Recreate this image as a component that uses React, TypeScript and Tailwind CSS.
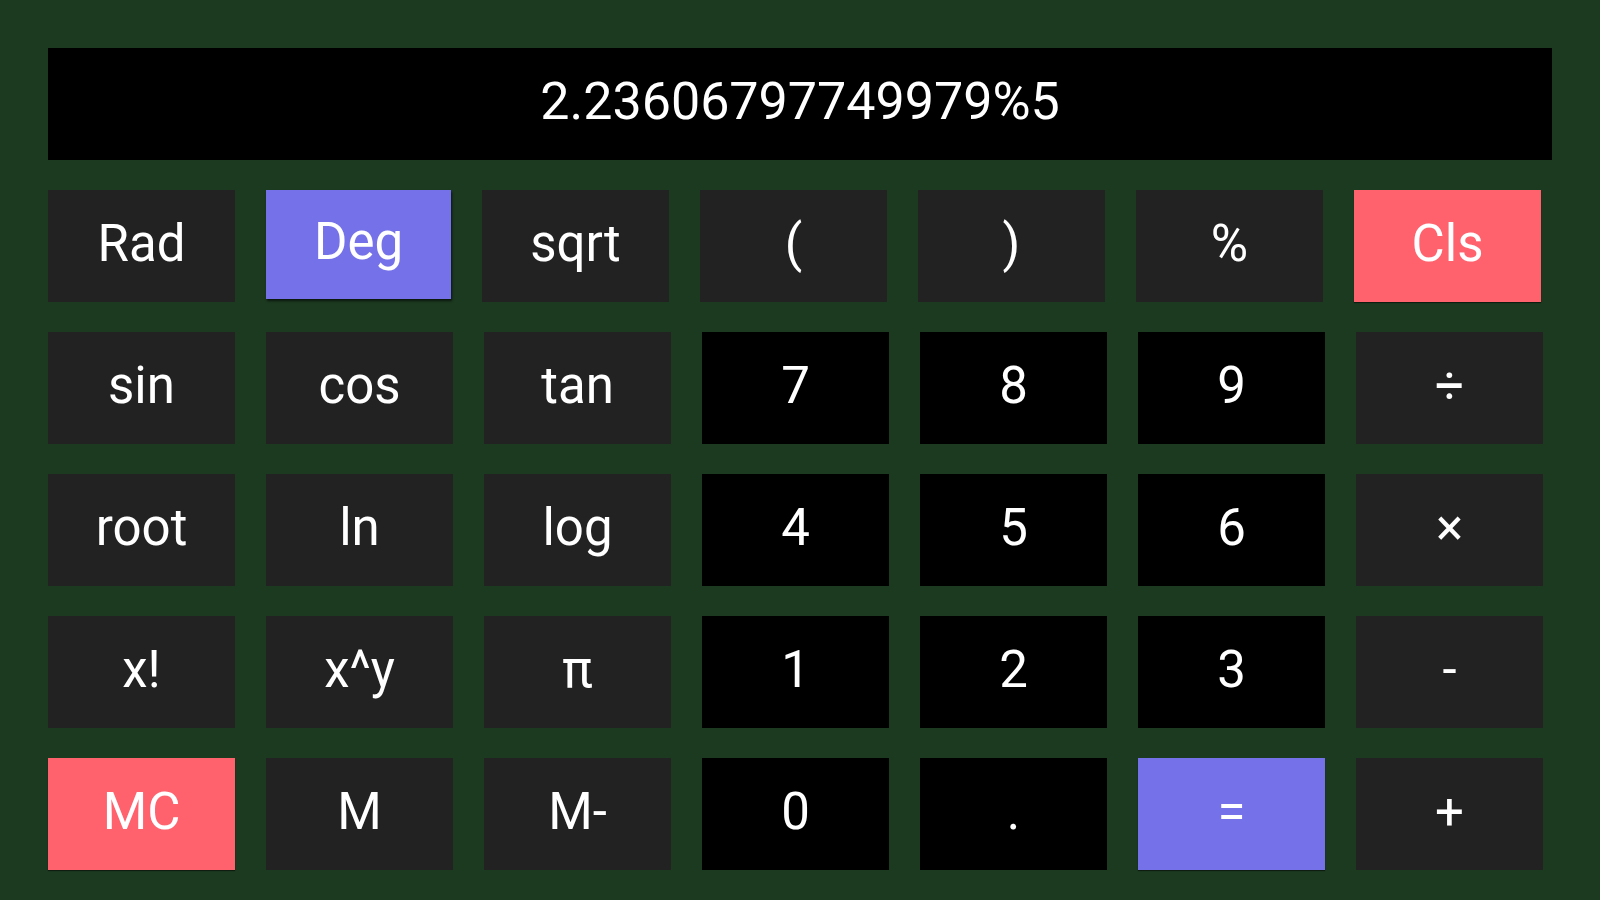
const rows: { label: string; kind: 'fn' | 'num' | 'red' | 'blue' | 'deg' }[][] = [
  [
    { label: 'Rad', kind: 'fn' },
    { label: 'Deg', kind: 'deg' },
    { label: 'sqrt', kind: 'fn' },
    { label: '(', kind: 'fn' },
    { label: ')', kind: 'fn' },
    { label: '%', kind: 'fn' },
    { label: 'Cls', kind: 'red' },
  ],
  [
    { label: 'sin', kind: 'fn' },
    { label: 'cos', kind: 'fn' },
    { label: 'tan', kind: 'fn' },
    { label: '7', kind: 'num' },
    { label: '8', kind: 'num' },
    { label: '9', kind: 'num' },
    { label: '÷', kind: 'fn' },
  ],
  [
    { label: 'root', kind: 'fn' },
    { label: 'ln', kind: 'fn' },
    { label: 'log', kind: 'fn' },
    { label: '4', kind: 'num' },
    { label: '5', kind: 'num' },
    { label: '6', kind: 'num' },
    { label: '×', kind: 'fn' },
  ],
  [
    { label: 'x!', kind: 'fn' },
    { label: 'x^y', kind: 'fn' },
    { label: 'π', kind: 'fn' },
    { label: '1', kind: 'num' },
    { label: '2', kind: 'num' },
    { label: '3', kind: 'num' },
    { label: '-', kind: 'fn' },
  ],
  [
    { label: 'MC', kind: 'red' },
    { label: 'M', kind: 'fn' },
    { label: 'M-', kind: 'fn' },
    { label: '0', kind: 'num' },
    { label: '.', kind: 'num' },
    { label: '=', kind: 'blue' },
    { label: '+', kind: 'fn' },
  ],
];

const kindClass = {
  fn: 'bg-[#222222] w-[187px] h-[112px]',
  num: 'bg-black w-[187px] h-[112px]',
  red: 'bg-[#ff616d] w-[187px] h-[112px] shadow-[0_1px_1px_rgba(0,0,0,0.5)]',
  blue: 'bg-[#7571e8] w-[187px] h-[112px] shadow-[0_1px_1px_rgba(0,0,0,0.5)]',
  deg: 'bg-[#7571e8] w-[185px] h-[109px] shadow-[1px_2px_2px_rgba(0,0,0,0.6)]',
};

export default function App() {
  return (
    <div
      className="w-[1600px] h-[900px] bg-[#1c3a20] pt-[48px] pl-[48px] text-white overflow-hidden"
      style={{ fontFamily: 'Roboto, "Noto Sans", sans-serif' }}
    >
      <div className="w-[1504px] h-[112px] bg-black flex items-center justify-center pb-[4px] text-[52px] leading-none">
        2.23606797749979%5
      </div>
      <div className="mt-[30px] flex flex-col gap-[30px]">
        {rows.map((row, i) => (
          <div key={i} className="flex gap-[31px]">
            {row.map(b => (
              <div
                key={b.label}
                className={`${kindClass[b.kind]} flex items-center justify-center pb-[6px] text-[51px] leading-none`}
              >
                {b.label}
              </div>
            ))}
          </div>
        ))}
      </div>
    </div>
  );
}
